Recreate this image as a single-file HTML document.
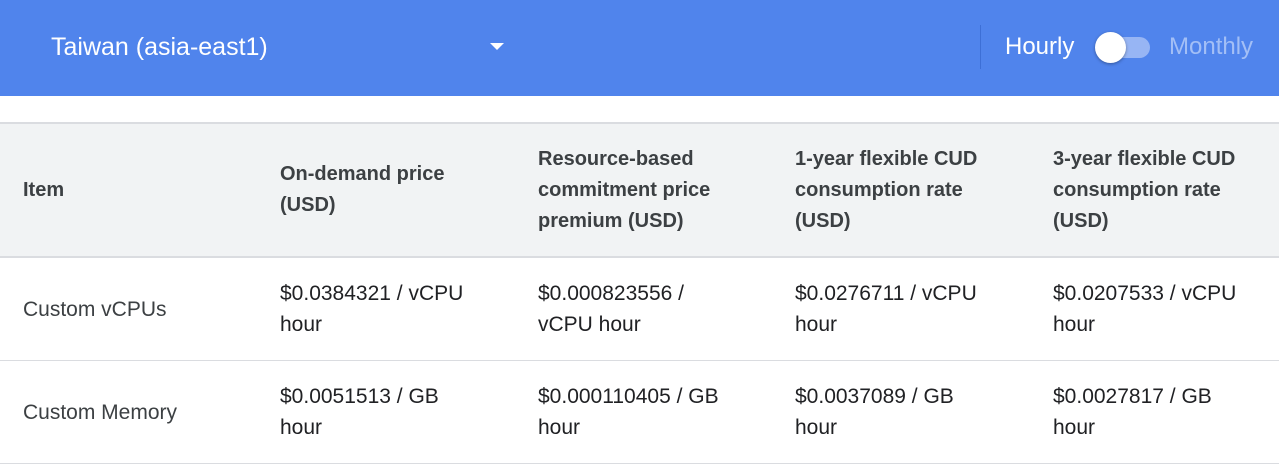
<!DOCTYPE html><html><head><style>
body{margin:0;width:1279px;height:464px;overflow:hidden;font-family:"Liberation Sans",sans-serif;background:#fff}
.top{position:absolute;left:0;top:0;width:1279px;height:96px;background:#5084ec;color:#fff}
.t{position:absolute;font-size:24px;top:33px}
table{position:absolute;top:122px;left:0;width:1279px;border-collapse:collapse;font-size:21px;line-height:31px}
th,td{text-align:left;vertical-align:middle;padding:0}
th{background:#f1f3f4;color:#3c4043;font-weight:bold;font-size:20px;height:132px;border-top:2px solid #dadce0;border-bottom:2px solid #dadce0}
td{color:#202124;height:102px;border-bottom:1px solid #dadce0}
td:first-child,th:first-child{padding-left:23px;width:257px}
td:first-child{color:#3c4043}
</style></head><body>
<div class="top">
<div class="t" style="left:51px;font-size:25px">Taiwan (asia-east1)</div>
<div style="position:absolute;left:490px;top:43px;width:0;height:0;border-left:7px solid transparent;border-right:7px solid transparent;border-top:7px solid #fff"></div>
<div style="position:absolute;left:980px;top:25px;width:1px;height:44px;background:#3d6fd6"></div>
<div class="t" style="left:1005px">Hourly</div>
<div style="position:absolute;left:1097px;top:37px;width:53px;height:21px;border-radius:11px;background:#97b5f4"></div>
<div style="position:absolute;left:1095px;top:32px;width:31px;height:31px;border-radius:50%;background:#fff;box-shadow:0 1px 3px rgba(0,0,0,.35)"></div>
<div class="t" style="left:1169px;color:#a3bff6">Monthly</div>
</div>
<table>
<tr><th>Item</th><th style="width:258px">On-demand price<br>(USD)</th><th style="width:257px">Resource-based<br>commitment price<br>premium (USD)</th><th style="width:258px">1-year flexible CUD<br>consumption rate<br>(USD)</th><th>3-year flexible CUD<br>consumption rate<br>(USD)</th></tr>
<tr><td>Custom vCPUs</td><td>$0.0384321 / vCPU<br>hour</td><td>$0.000823556 /<br>vCPU hour</td><td>$0.0276711 / vCPU<br>hour</td><td>$0.0207533 / vCPU<br>hour</td></tr>
<tr><td>Custom Memory</td><td>$0.0051513 / GB<br>hour</td><td>$0.000110405 / GB<br>hour</td><td>$0.0037089 / GB<br>hour</td><td>$0.0027817 / GB<br>hour</td></tr>
</table>
</body></html>
